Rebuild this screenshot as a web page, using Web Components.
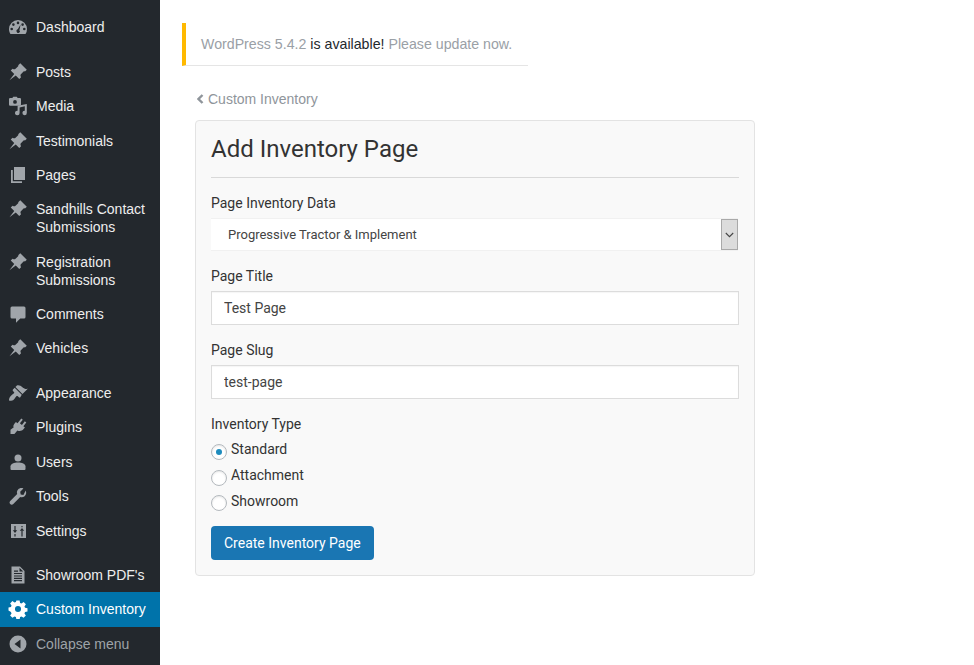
<!DOCTYPE html>
<html lang="en">
<head>
<meta charset="utf-8">
<title>Add Inventory Page</title>
<style>
    html, body { margin: 0; height: 100%; background: #fff; overflow: hidden; }
    body { display: flex; font-family: "Liberation Sans", Arial, sans-serif; }
</style>
</head>
<body>
<admin-menu>
    <menu-item icon="dashboard">Dashboard</menu-item>
    <menu-sep></menu-sep>
    <menu-item icon="pin">Posts</menu-item>
    <menu-item icon="media">Media</menu-item>
    <menu-item icon="pin">Testimonials</menu-item>
    <menu-item icon="pages">Pages</menu-item>
    <menu-item icon="pin">Sandhills Contact Submissions</menu-item>
    <menu-item icon="pin">Registration Submissions</menu-item>
    <menu-item icon="comments">Comments</menu-item>
    <menu-item icon="pin">Vehicles</menu-item>
    <menu-sep short></menu-sep>
    <menu-item icon="appearance">Appearance</menu-item>
    <menu-item icon="plugins">Plugins</menu-item>
    <menu-item icon="users">Users</menu-item>
    <menu-item icon="tools">Tools</menu-item>
    <menu-item icon="settings">Settings</menu-item>
    <menu-sep short></menu-sep>
    <menu-item icon="document">Showroom PDF's</menu-item>
    <menu-item icon="gear" active>Custom Inventory</menu-item>
    <menu-item icon="collapse" muted>Collapse menu</menu-item>
</admin-menu>
<page-main>
    <update-notice></update-notice>
    <back-link>Custom Inventory</back-link>
    <inventory-card heading="Add Inventory Page">
        <form-field label="Page Inventory Data"><select-box value="Progressive Tractor &amp; Implement"></select-box></form-field>
        <form-field label="Page Title"><text-box value="Test Page"></text-box></form-field>
        <form-field label="Page Slug"><text-box value="test-page"></text-box></form-field>
        <form-field label="Inventory Type" tight>
            <radio-option checked>Standard</radio-option>
            <radio-option>Attachment</radio-option>
            <radio-option>Showroom</radio-option>
        </form-field>
        <blue-button>Create Inventory Page</blue-button>
    </inventory-card>
</page-main>

<script>
    const ICONS = {
        dashboard: '<path fill-rule="evenodd" d="M10 3a9 9 0 0 0-9 9c0 1.900.6 3.600 1.500 5h15a9 9 0 0 0 1.500-5 9 9 0 0 0-9-9zM10 4.600a1.300 1.300 0 1 1 0 2.600 1.300 1.300 0 0 1 0-2.600zM5.400 6.300a1.300 1.300 0 1 1 0 2.600 1.300 1.300 0 0 1 0-2.600zM14.600 6.300a1.300 1.300 0 1 1 0 2.600 1.300 1.300 0 0 1 0-2.600zM3.700 10.700a1.300 1.300 0 1 1 0 2.600 1.300 1.300 0 0 1 0-2.600zM16.300 10.700a1.300 1.300 0 1 1 0 2.600 1.300 1.300 0 0 1 0-2.600zM12.600 7.600l-1.200 5.600a1.600 1.600 0 1 1-2.700 1.500 1.600 1.600 0 0 1 1.100-2.500z"/>',
        pin: '<path d="M10.440 3.020l1.820-1.820 6.530 6.530-1.820 1.820c-.47-.29-1-.3-1.400 0l-2.900 2.900c-.4.6-.1 1.900.4 2.700l-1.820 1.820-3.500-3.500-6.300 4.800 4.800-6.300-3.500-3.500 1.820-1.820c.8.5 2.100.8 2.700.4l2.900-2.900c.3-.4.3-.93-.03-1.130z"/>',
        media: '<path fill-rule="evenodd" d="M2.300 2h2l1-1.300h3.400L9.700 2h2A1.200 1.200 0 0 1 13 3.200v5.400a1.200 1.200 0 0 1-1.200 1.200H2.300A1.200 1.200 0 0 1 1 8.600V3.200A1.200 1.200 0 0 1 2.300 2zM7 4a1.900 1.900 0 1 0 0 3.800A1.900 1.900 0 0 0 7 4z"/><path d="M18.800 8v9a2.200 2.200 0 1 1-2-2.200v-4.500l-5.200 1.300v5.300a2.300 2.300 0 1 1-2-2.200v-4.900z"/>',
        pages: '<path d="M6 2h11v13H6z"/><path d="M3 5h1.800v11.200H14V18H3z"/>',
        comments: '<path d="M4 2.500h12A1.500 1.500 0 0 1 17.500 4v9a1.500 1.500 0 0 1-1.500 1.500h-3.700L8 18.800v-4.300H4A1.500 1.500 0 0 1 2.500 13V4A1.500 1.500 0 0 1 4 2.500z"/>',
        appearance: '<path d="M14.480 11.060L7.410 3.990l1.500-1.500c.5-.56 2.300-.47 3.510.32 1.210.8 1.430 1.280 2.910 2.100 1.180.64 2.450 1.260 4.450.85z"/><path d="M13.770 11.770L6.700 4.700 4.930 6.470c-.39.39-.39 1.020 0 1.410l1.060 1.060c.39.39.39 1.030 0 1.420-.6.6-1.430 1.110-2.210 1.690-.35.26-.7.530-1.010.84-1.260 1.260-2 3.400-1.700 4.700.9.6 3.400.2 4.800-1.200.31-.31.58-.66.84-1.010.58-.78 1.090-1.610 1.690-2.210.39-.39 1.030-.39 1.420 0l1.060 1.060c.39.39 1.020.39 1.410 0z"/>',
        plugins: '<path d="M13.300 1.500l1.500 1.200-2.900 3.600 2 1.600 2.900-3.600 1.500 1.200-2.900 3.700 1.500 1.300-1.300 1.600c-1.700 2.100-4.200 2.500-6.200 1.400l-3 3.500H2.500v-4.300l3.300-2.500C5 9.900 5.300 8.200 6.600 6.600L7.900 5l1.600 1.200z"/>',
        users: '<circle cx="10" cy="6" r="3.500"/><path d="M10 10.500c3.800 0 7.500 1.300 7.500 3.800V17c0 .6-.6 1-1.500 1H4c-.9 0-1.500-.4-1.500-1v-2.700c0-2.500 3.700-3.800 7.500-3.800z"/>',
        tools: '<path d="M17.700 4.500c1 2.400.4 4.400-1.100 5.700-1.300 1.100-3 1.300-4.400.8l-6.900 7.100c-.9.900-2.300.9-3.100 0-.9-.9-.8-2.300 0-3.100l7-6.900c-.6-1.500-.3-3.300.9-4.500 1.300-1.400 3.300-2 5.300-1l-3.200 3.100.5 2.800 2.700.6z"/>',
        settings: '<path d="M3 3h15v14H3z"/><path fill="none" stroke="#23282d" stroke-width="1.200" d="M7 5v5M7 13v2.500M14 15.500v-6M14 5v1.200"/><path fill="#23282d" d="M4.800 9.300h4.400L7 12zM11.800 9.700h4.400L14 7z"/>',
        document: '<path fill-rule="evenodd" d="M3.500 1.500h8.500l4.500 4.500v12.500h-13zM6 8v1.100h8V8zM6 10.400v1.100h8v-1.100zM6 12.800v1.100h8v-1.100zM6 15.100v1.100h8v-1.100zM6 5.600v1.100h4V5.600zM11.500 2.800v3.700h3.700z"/>',
        gear: '<path fill-rule="evenodd" d="M8.300 1h3.400l.5 2.600 1.500.6 2.200-1.500 2.400 2.400-1.500 2.200.6 1.500 2.600.5v3.400l-2.600.5-.6 1.500 1.500 2.200-2.400 2.400-2.200-1.500-1.500.6-.5 2.600H8.300l-.5-2.600-1.500-.6-2.200 1.500-2.400-2.400 1.500-2.200-.6-1.500L0 11.700V8.300l2.600-.5.6-1.500-1.500-2.200 2.400-2.400 2.200 1.500 1.500-.6zM10 6.800a3.200 3.200 0 1 0 0 6.400 3.200 3.200 0 0 0 0-6.400z" transform="translate(.5 .5) scale(.95)"/>',
        collapse: '<path fill-rule="evenodd" d="M10 1.500a8.500 8.500 0 1 1 0 17 8.500 8.500 0 0 1 0-17zM12.500 5.500L6.500 10l6 4.500z"/>'
    };

    class AdminMenu extends HTMLElement {
        constructor() {
            super();
            this.attachShadow({ mode: 'open' });
            this.shadowRoot.innerHTML = `
                <style>
                    :host {
                        display: block;
                        flex: none;
                        box-sizing: border-box;
                        width: 160px;
                        height: 665px;
                        padding-top: 9.6px;
                        background: #23282d;
                        overflow: hidden;
                    }
                </style>
                <slot></slot>
            `;
        }
    }

    class MenuSep extends HTMLElement {
        constructor() {
            super();
            this.attachShadow({ mode: 'open' });
            this.shadowRoot.innerHTML = `
                <style>
                    :host { display: block; height: 10.7px; }
                    :host([short]) { height: 10.2px; }
                </style>
            `;
        }
    }

    class MenuItem extends HTMLElement {
        constructor() {
            super();
            this.attachShadow({ mode: 'open' });
        }

        connectedCallback() {
            const icon = ICONS[this.getAttribute('icon')] || '';
            this.shadowRoot.innerHTML = `
                <style>
                    :host {
                        display: flex;
                        box-sizing: border-box;
                        padding: 8.2px 8px 8.2px 0;
                        color: #eeeeee;
                        font: 14px/18px "Liberation Sans", Arial, sans-serif;
                    }
                    :host([active]) { background: #0073aa; color: #fff; }
                    :host([muted]) { color: #9ea3a8; }
                    svg {
                        flex: none;
                        width: 20px;
                        height: 20px;
                        margin: -1px 0 -1px 8px;
                        fill: #a0a5aa;
                    }
                    :host([active]) svg { fill: #fff; }
                    .label { margin-left: 8px; }
                </style>
                <svg viewBox="0 0 20 20">${icon}</svg>
                <span class="label"><slot></slot></span>
            `;
        }
    }

    class PageMain extends HTMLElement {
        constructor() {
            super();
            this.attachShadow({ mode: 'open' });
            this.shadowRoot.innerHTML = `
                <style>
                    :host {
                        display: flex;
                        flex-direction: column;
                        align-items: flex-start;
                        flex: 1;
                        padding: 23px 0 0 22px;
                    }
                </style>
                <slot></slot>
            `;
        }
    }

    class UpdateNotice extends HTMLElement {
        constructor() {
            super();
            this.attachShadow({ mode: 'open' });
            this.shadowRoot.innerHTML = `
                <style>
                    :host {
                        display: block;
                        box-sizing: border-box;
                        width: 346px;
                        height: 43px;
                        padding-left: 15px;
                        border-left: 4px solid #ffb900;
                        border-bottom: 1px solid #e5e5e5;
                        color: #23282d;
                        font: 14.2px/42px "Liberation Sans", Arial, sans-serif;
                    }
                    a { color: #9aa0a6; text-decoration: none; }
                </style>
                <a href="#">WordPress 5.4.2</a> is available! <a href="#">Please update now.</a>
            `;
        }
    }

    class BackLink extends HTMLElement {
        constructor() {
            super();
            this.attachShadow({ mode: 'open' });
            this.shadowRoot.innerHTML = `
                <style>
                    :host {
                        display: flex;
                        align-items: center;
                        gap: 4px;
                        margin: 24px 0 12px 15px;
                        color: #8f959b;
                        font: 14px/18px "Liberation Sans", Arial, sans-serif;
                    }
                    svg { width: 7px; height: 10px; fill: none; stroke: #8f959b; stroke-width: 2.400; }
                </style>
                <svg viewBox="0 0 7 10"><path d="M5.500 1L1.500 5l4 4"/></svg>
                <span><slot></slot></span>
            `;
        }
    }

    class InventoryCard extends HTMLElement {
        constructor() {
            super();
            this.attachShadow({ mode: 'open' });
        }

        connectedCallback() {
            this.shadowRoot.innerHTML = `
                <style>
                    :host {
                        display: block;
                        box-sizing: border-box;
                        width: 560px;
                        height: 456px;
                        margin-left: 13px;
                        padding: 0 15px;
                        background: #f9f9f9;
                        border: 1px solid #e3e3e3;
                        border-radius: 4px;
                        color: #333;
                        font: 14px/20px Roboto, sans-serif;
                    }
                    h2 {
                        margin: 0 0 15px;
                        padding: 12px 0 11px;
                        border-bottom: 1px solid #d9d9d9;
                        color: #333;
                        font: 400 24px/33px Roboto, sans-serif;
                    }
                </style>
                <h2>${this.getAttribute('heading')}</h2>
                <slot></slot>
            `;
        }
    }

    class FormField extends HTMLElement {
        constructor() {
            super();
            this.attachShadow({ mode: 'open' });
        }

        connectedCallback() {
            this.shadowRoot.innerHTML = `
                <style>
                    :host { display: block; margin-bottom: 15px; }
                    :host([tight]) { margin-bottom: 9px; }
                    label { display: block; margin-bottom: 5px; color: #333; }
                </style>
                <label>${this.getAttribute('label')}</label>
                <slot></slot>
            `;
        }
    }

    class SelectBox extends HTMLElement {
        constructor() {
            super();
            this.attachShadow({ mode: 'open' });
        }

        connectedCallback() {
            this.shadowRoot.innerHTML = `
                <style>
                    :host {
                        display: flex;
                        align-items: center;
                        box-sizing: border-box;
                        width: 527px;
                        height: 33px;
                        padding-left: 17px;
                        background: #fff;
                        border: solid #f1f1f1;
                        border-width: 1px 0;
                        color: #444;
                        font: 13px/20px Roboto, sans-serif;
                    }
                    .value { flex: 1; }
                    .arrow {
                        display: flex;
                        align-items: center;
                        justify-content: center;
                        box-sizing: border-box;
                        width: 17px;
                        height: 31px;
                        background: #dcdcdc;
                        border: 1px solid #a9a9a9;
                    }
                    svg { width: 9px; height: 6px; fill: none; stroke: #444; stroke-width: 1.100; }
                </style>
                <span class="value">${this.getAttribute('value').replace('&', '&amp;')}</span>
                <span class="arrow"><svg viewBox="0 0 9 6"><path d="M.8 1l3.700 3.700L8.200 1"/></svg></span>
            `;
        }
    }

    class TextBox extends HTMLElement {
        constructor() {
            super();
            this.attachShadow({ mode: 'open' });
        }

        connectedCallback() {
            this.shadowRoot.innerHTML = `
                <style>
                    :host { display: block; }
                    input {
                        display: block;
                        box-sizing: border-box;
                        width: 528px;
                        height: 34px;
                        margin: 0;
                        padding: 0 12px;
                        background: #fff;
                        border: 1px solid #dcdcdc;
                        box-shadow: inset 0 1px 1px rgba(0, 0, 0, .04);
                        color: #444;
                        font: 14px Roboto, sans-serif;
                        outline: none;
                    }
                </style>
                <input type="text" value="${this.getAttribute('value')}">
            `;
        }
    }

    class RadioOption extends HTMLElement {
        constructor() {
            super();
            this.attachShadow({ mode: 'open' });
        }

        connectedCallback() {
            this.shadowRoot.innerHTML = `
                <style>
                    :host {
                        display: flex;
                        height: 26px;
                        gap: 4px;
                        color: #333;
                        font: 14px/20px Roboto, sans-serif;
                    }
                    .dot {
                        flex: none;
                        display: flex;
                        align-items: center;
                        justify-content: center;
                        box-sizing: border-box;
                        width: 16px;
                        height: 16px;
                        margin-top: 5px;
                        background: #fff;
                        border: 1px solid #b4b9be;
                        border-radius: 50%;
                        box-shadow: inset 0 1px 2px rgba(0, 0, 0, .1);
                    }
                    :host(:last-of-type) .dot { margin-top: 4px; }
                    :host([checked]) .dot::after {
                        content: "";
                        width: 6px;
                        height: 6px;
                        background: #1e8cbe;
                        border-radius: 50%;
                    }
                </style>
                <span class="dot"></span>
                <span><slot></slot></span>
            `;
        }
    }

    class BlueButton extends HTMLElement {
        constructor() {
            super();
            this.attachShadow({ mode: 'open' });
            this.shadowRoot.innerHTML = `
                <style>
                    :host {
                        display: inline-block;
                        box-sizing: border-box;
                        height: 34px;
                        padding: 7px 13px;
                        background: #1a76b3;
                        border-radius: 4px;
                        color: #fff;
                        font: 14px/20px Roboto, sans-serif;
                        cursor: pointer;
                    }
                </style>
                <slot></slot>
            `;
        }
    }

    customElements.define('admin-menu', AdminMenu);
    customElements.define('menu-sep', MenuSep);
    customElements.define('menu-item', MenuItem);
    customElements.define('page-main', PageMain);
    customElements.define('update-notice', UpdateNotice);
    customElements.define('back-link', BackLink);
    customElements.define('inventory-card', InventoryCard);
    customElements.define('form-field', FormField);
    customElements.define('select-box', SelectBox);
    customElements.define('text-box', TextBox);
    customElements.define('radio-option', RadioOption);
    customElements.define('blue-button', BlueButton);
</script>
</body>
</html>
